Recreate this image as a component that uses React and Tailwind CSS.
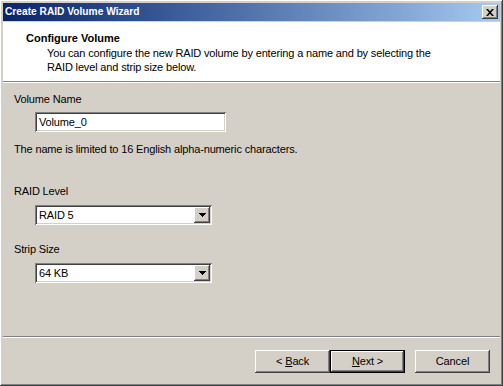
import React from 'react';

const raised =
  'shadow-[inset_-1px_-1px_#404040,inset_1px_1px_#ffffff,inset_-2px_-2px_#808080,inset_2px_2px_#d4d0c8]';
const sunken =
  'shadow-[inset_1px_1px_#808080,inset_-1px_-1px_#ffffff,inset_2px_2px_#404040,inset_-2px_-2px_#d4d0c8]';

const Field = ({ value, width }) => (
  <div className={`h-[20px] bg-white ${sunken} flex items-center pl-[4px]`} style={{ width }}>
    <span className="leading-[14px]">{value}</span>
  </div>
);

const Combo = ({ value }) => (
  <div className={`w-[177px] h-[20px] bg-white ${sunken} flex items-center p-[2px]`}>
    <span className="flex-1 pl-[2px] leading-[14px]">{value}</span>
    <div className={`w-[16px] h-[16px] bg-[#d4d0c8] ${raised} flex items-center justify-center`}>
      <svg width="7" height="4" viewBox="0 0 7 4">
        <path d="M0 0h7v1h-1v1h-1v1h-1v1h-1v-1h-1v-1h-1v-1h-1z" fill="#000" />
      </svg>
    </div>
  </div>
);

const Button = ({ children, isDefault }) => (
  <div
    className={`w-[75px] h-[23px] flex items-center justify-center bg-[#d4d0c8] ${
      isDefault
        ? 'shadow-[inset_0_0_0_1px_#000000,inset_-2px_-2px_#404040,inset_2px_2px_#ffffff,inset_-3px_-3px_#808080]'
        : raised
    }`}
  >
    {children}
  </div>
);

export default function App() {
  return (
    <div
      className={`w-[503px] h-[386px] bg-[#d4d0c8] p-[3px] flex flex-col text-[11px] tracking-[-0.15px] text-black ${raised}`}
      style={{ fontFamily: '"Liberation Sans", Arial, sans-serif' }}
    >
      <div className="h-[18px] shrink-0 flex items-center justify-between pl-[2px] pr-[2px] bg-gradient-to-r from-[#0a246a] to-[#a6caf0]">
        <span className="text-white font-bold text-[10.2px] tracking-normal leading-[14px]">Create RAID Volume Wizard</span>
        <div className={`w-[16px] h-[14px] bg-[#d4d0c8] ${raised} flex items-center justify-center`}>
          <svg width="8" height="7" viewBox="0 0 8 7">
            <path d="M0 0h2l2 2.2L6 0h2L5 3.5 8 7H6L4 4.8 2 7H0l3-3.5z" fill="#000" />
          </svg>
        </div>
      </div>
      <div className="h-[1px] shrink-0" />

      <div className="h-[59px] shrink-0 bg-white pt-[9px] pl-[23px]">
        <div className="font-bold leading-[14px] tracking-normal">Configure Volume</div>
        <div className="pl-[21px] mt-[1px] leading-[14px]">
          You can configure the new RAID volume by entering a name and by selecting the
          <br />
          RAID level and strip size below.
        </div>
      </div>
      <div className="h-[1px] shrink-0 bg-[#808080]" />
      <div className="h-[1px] shrink-0 bg-white" />

      <div className="flex-1 flex flex-col pl-[11px] pt-[9px]">
        <div className="leading-[14px]">Volume Name</div>
        <div className="mt-[6px] pl-[21px]">
          <Field value="Volume_0" width={191} />
        </div>
        <div className="mt-[10px] leading-[14px]">The name is limited to 16 English alpha-numeric characters.</div>

        <div className="mt-[28px] leading-[14px]">RAID Level</div>
        <div className="mt-[7px] pl-[21px]">
          <Combo value="RAID 5" />
        </div>

        <div className="mt-[17px] leading-[14px]">Strip Size</div>
        <div className="mt-[7px] pl-[21px]">
          <Combo value="64 KB" />
        </div>
      </div>

      <div className="h-[1px] shrink-0 bg-[#808080]" />
      <div className="h-[1px] shrink-0 bg-white" />
      <div className="h-[45px] shrink-0 flex items-start justify-end pt-[12px] pr-[10px]">
        <Button>
          &lt; <span className="underline ml-[3px]">B</span>ack
        </Button>
        <Button isDefault>
          <span className="underline">N</span>ext &gt;
        </Button>
        <div className="w-[10px]" />
        <Button>Cancel</Button>
      </div>
    </div>
  );
}
